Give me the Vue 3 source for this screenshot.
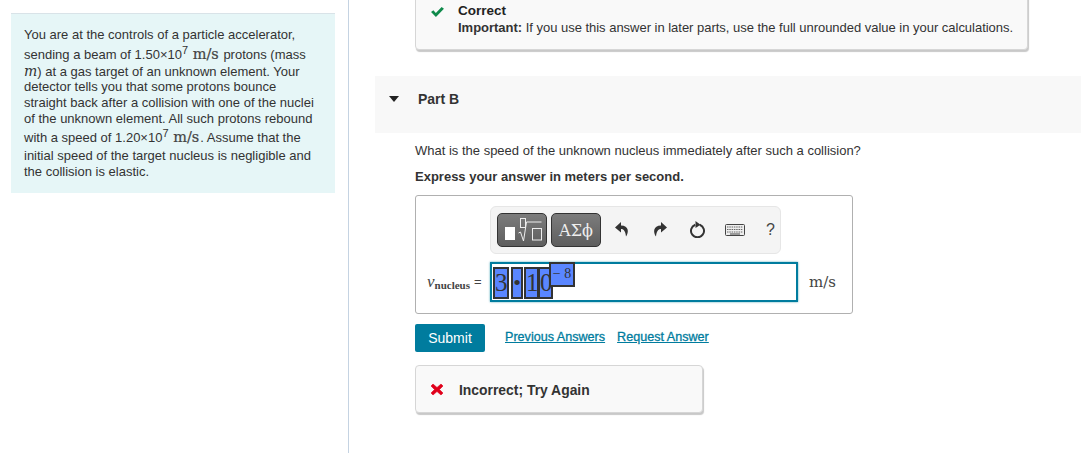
<script setup>
const lines = [
  { mt: 0, parts: ['You are at the controls of a particle accelerator,'] },
  { mt: 3, parts: ['sending a beam of 1.50×10', { sup: '7' }, ' ', { unit: 'm/s' }, ' protons (mass'] },
  { mt: 1, parts: [{ ital: 'm' }, ') at a gas target of an unknown element. Your'] },
  { mt: 0, parts: ['detector tells you that some protons bounce'] },
  { mt: 0, parts: ['straight back after a collision with one of the nuclei'] },
  { mt: 0, parts: ['of the unknown element. All such protons rebound'] },
  { mt: 2, parts: ['with a speed of 1.20×10', { sup: '7' }, ' ', { unit: 'm/s' }, '. Assume that the'] },
  { mt: 3, parts: ['initial speed of the target nucleus is negligible and'] },
  { mt: 0, parts: ['the collision is elastic.'] }
]
</script>

<template>
  <div class="page">
    <aside class="side">
      <div class="intro">
        <div v-for="(l, i) in lines" :key="i" class="line" :style="{ marginTop: l.mt + 'px' }">
          <template v-for="(p, j) in l.parts" :key="j">
            <template v-if="typeof p === 'string'">{{ p }}</template>
            <span v-else-if="p.sup" class="sup">{{ p.sup }}</span>
            <span v-else-if="p.unit" class="unit">{{ p.unit }}</span>
            <span v-else class="ital">{{ p.ital }}</span>
          </template>
        </div>
      </div>
    </aside>
    <main class="main">
      <div class="box correct">
        <svg class="check" width="15" height="12" viewBox="0 0 16 13"><path d="M1 6.500l2.500-2 2.700 3L12.500 1 15 3l-8.700 9z" fill="#0f8a4b"/></svg>
        <div>
          <div class="c-title">Correct</div>
          <div class="c-body"><b>Important:</b> If you use this answer in later parts, use the full unrounded value in your calculations.</div>
        </div>
      </div>

      <div class="part">
        <span class="tri"></span>
        <span class="part-name">Part B</span>
      </div>

      <div class="content">
        <p class="q">What is the speed of the unknown nucleus immediately after such a collision?</p>
        <p class="ex">Express your answer in meters per second.</p>

        <div class="answer">
          <div class="toolbar">
            <div class="tbtn t1">
              <svg width="48" height="32" viewBox="0 0 48 32" fill="none">
                <rect x="7" y="13" width="10" height="13" fill="#fff"/>
                <g stroke="#eee" stroke-width="1">
                  <rect x="22.500" y="4.500" width="5" height="9"/>
                  <path d="M20.500 19l2-1 3 9 3-19h15"/>
                  <rect x="34.500" y="14.500" width="9" height="11.500"/>
                </g>
              </svg>
            </div>
            <div class="tbtn t2">ΑΣϕ</div>
            <svg class="ic i1" width="14" height="15" viewBox="0 0 14 15"><path d="M6 0L0 5.500l6 5V7c3 0 4.500 2.500 5 7.500 3-4 3-11-5-11z" fill="#333"/></svg>
            <svg class="ic i2" width="14" height="15" viewBox="0 0 14 15"><path d="M8 0l6 5.500-6 5V7c-3 0-4.500 2.500-5 7.500-3-4-3-11 5-11z" fill="#333"/></svg>
            <svg class="ic i3" width="17" height="17" viewBox="0 0 17 17" fill="none"><path d="M10.800 3.700a6.500 6.500 0 1 1-4.600 0" stroke="#333" stroke-width="2"/><path d="M6.500 0l5 3.700-5 3.300z" fill="#333"/></svg>
            <svg class="ic i4" width="20" height="12" viewBox="0 0 20 12"><rect x=".5" y=".5" width="19" height="11" rx="1" fill="#eee" stroke="#444"/><path d="M2 3h16M2 5.500h16M2 8h16" stroke="#666" stroke-dasharray="1.500 .8"/><path d="M5 10h10" stroke="#444"/></svg>
            <span class="help">?</span>
          </div>
          <div class="row">
            <span class="label"><i>v</i><span class="lsub">nucleus</span><span class="eq">=</span></span>
            <div class="input">
              <span class="sel three">3</span>
              <span class="sel dot">•</span>
              <span class="sel one">1</span>
              <span class="sel zero">0</span>
              <span class="sel exp">− 8</span>
            </div>
            <span class="unit-r">m/s</span>
          </div>
        </div>

        <div class="actions">
          <button class="submit">Submit</button>
          <a class="link first">Previous Answers</a>
          <a class="link">Request Answer</a>
        </div>

        <div class="box wrong">
          <svg width="14" height="13" viewBox="0 0 14 13"><path d="M1 3l2-2 4 3.500L11 1l2 2-3.500 3.500L13 10l-2 2-4-3.500L3 12l-2-2 3.500-3.500z" fill="#e0001b" stroke="#e0001b" stroke-width=".6"/></svg>
          <span class="w-text">Incorrect; Try Again</span>
        </div>
      </div>
    </main>
  </div>
</template>

<style>
html, body { margin: 0; background: #fff; overflow: hidden; }
</style>

<style scoped>
.page {
  display: flex;
  width: 1084px;
  height: 453px;
  overflow: hidden;
  font-family: "Liberation Sans", Arial, sans-serif;
  color: #333;
}
.side {
  flex: none;
  width: 337px;
  height: 453px;
  border-right: 1px solid #c5d3e2;
  padding: 13px 0 0 11px;
  box-sizing: content-box;
}
.intro {
  width: 324px;
  height: 180px;
  box-sizing: border-box;
  background: #e6f6f7;
  border-top: 1px solid #d9e3e8;
  padding: 13px 0 0 13px;
  font-size: 13px;
  color: #333;
}
.line { white-space: nowrap; height: 16px; line-height: 16px; }
.sup { font-size: 11px; position: relative; top: -5px; margin-right: 1px; }
.unit { font-family: "DejaVu Serif", serif; font-size: 14.500px; font-weight: 400; color: #444; -webkit-text-stroke: .2px #444; margin-right: 1px; }
.ital { font-family: "DejaVu Serif", serif; font-style: italic; font-size: 14px; }
.main { flex: 1; min-width: 0; padding-left: 26px; }
.box {
  box-sizing: border-box;
  background: #f9f9f9;
  border: 1px solid #d6d6d6;
  border-radius: 4px;
  box-shadow: 1px 2px 1px #c8c8c8;
}
.correct {
  width: 613px;
  height: 60px;
  margin: -10px 0 0 40px;
  padding: 12px 0 0 14px;
  display: flex;
  gap: 13px;
  align-items: flex-start;
}
.check { margin-top: 3px; }
.c-title { font-size: 13.500px; font-weight: 700; line-height: 16px; color: #222; }
.c-body { font-size: 13px; line-height: 17px; color: #333; white-space: nowrap; letter-spacing: -.02px; }
.part {
  width: 706px;
  height: 57px;
  margin-top: 26px;
  background: #f8f8f8;
  display: flex;
  align-items: flex-start;
  padding: 15px 0 0 14px;
  box-sizing: border-box;
}
.tri {
  width: 0; height: 0;
  margin-top: 5px;
  border-left: 5px solid transparent;
  border-right: 5px solid transparent;
  border-top: 6px solid #222;
}
.part-name { margin-left: 19px; font-size: 14px; font-weight: 700; line-height: 16px; color: #333; }
.content { padding-left: 40px; }
.q { margin: 10px 0 0; font-size: 13px; line-height: 15px; color: #333; }
.ex { margin: 11px 0 0; font-size: 13px; font-weight: 700; line-height: 15px; color: #333; }
.answer {
  box-sizing: border-box;
  width: 438px;
  height: 119px;
  margin-top: 11px;
  border: 1px solid #b0b0b0;
  border-radius: 3px;
  padding: 10px 0 0 74px;
}
.toolbar {
  box-sizing: border-box;
  width: 291px;
  height: 48px;
  background: #f4f4f4;
  border: 1px solid #e6e6e6;
  border-radius: 6px;
  display: flex;
  align-items: center;
  padding-left: 6px;
}
.tbtn {
  box-sizing: border-box;
  height: 34px;
  border: 1px solid #333;
  border-radius: 5px;
  background: linear-gradient(#7c7c7c, #5e5e5e);
  color: #eee;
  display: flex;
  align-items: center;
  justify-content: center;
}
.t1 { width: 50px; }
.t2 { width: 50px; margin-left: 4px; font-family: "DejaVu Serif", serif; font-size: 16px; }
.ic { flex: none; margin-top: -1px; }
.i1 { margin-left: 14px; }
.i2 { margin-left: 24px; }
.i3 { margin-left: 22px; }
.i4 { margin-left: 19px; }
.help { margin-left: 21px; font-size: 16px; color: #444; margin-top: -1px; }
.row { display: flex; align-items: center; margin-top: 8px; position: relative; }
.label {
  position: absolute;
  left: -63px;
  top: 10px;
  font-family: "Liberation Serif", serif;
  font-size: 15px;
  color: #444;
  white-space: nowrap;
}
.label i { font-size: 17px; }
.lsub { font-size: 11px; font-weight: 700; position: relative; top: 2px; }
.eq { font-family: "Liberation Sans", sans-serif; font-size: 13px; margin-left: 4px; position: relative; top: -1px; }
.input {
  box-sizing: border-box;
  width: 308px;
  height: 40px;
  border: 2px solid #007c9e;
  box-shadow: 0 0 2px #5ab;
  background: #fff;
  display: flex;
  padding: 3px 0 0 1px;
  position: relative;
}
.sel {
  box-sizing: border-box;
  height: 32px;
  background: #5a86ff;
  border: 2px solid #333;
  font-family: "Liberation Serif", serif;
  font-size: 25px;
  line-height: 28px;
  text-align: center;
  color: #333;
}
.three { width: 16px; margin-right: 2px; }
.dot { width: 12px; margin-right: 1px; font-size: 22px; line-height: 27px; overflow: hidden; }
.one { width: 15px; }
.zero { width: 15px; margin-left: -1px; }
.exp {
  position: absolute;
  left: 57px;
  top: -2px;
  width: 26px;
  height: 25px;
  font-size: 14px;
  line-height: 20px;
}
.unit-r { margin-left: 11px; font-family: "DejaVu Serif", serif; font-size: 15px; color: #444; }
.actions { display: flex; align-items: flex-start; margin-top: 10px; }
.submit {
  width: 70px;
  height: 28px;
  border: 0;
  border-radius: 2px;
  background: #007c9e;
  color: #fff;
  font: 14px "Liberation Sans", Arial, sans-serif;
  padding: 0;
}
.link {
  font-size: 12.600px;
  color: #007c9e;
  text-decoration: underline;
  line-height: 15px;
  margin-top: 6px;
  -webkit-text-stroke: .3px #007c9e;
}
.first { margin-left: 20px; margin-right: 12px; }
.wrong {
  width: 288px;
  height: 48px;
  margin-top: 13px;
  display: flex;
  align-items: center;
  padding: 0 0 0 14px;
  gap: 15px;
}
.w-text { font-size: 13.900px; font-weight: 700; color: #333; position: relative; top: 1px; }
</style>
